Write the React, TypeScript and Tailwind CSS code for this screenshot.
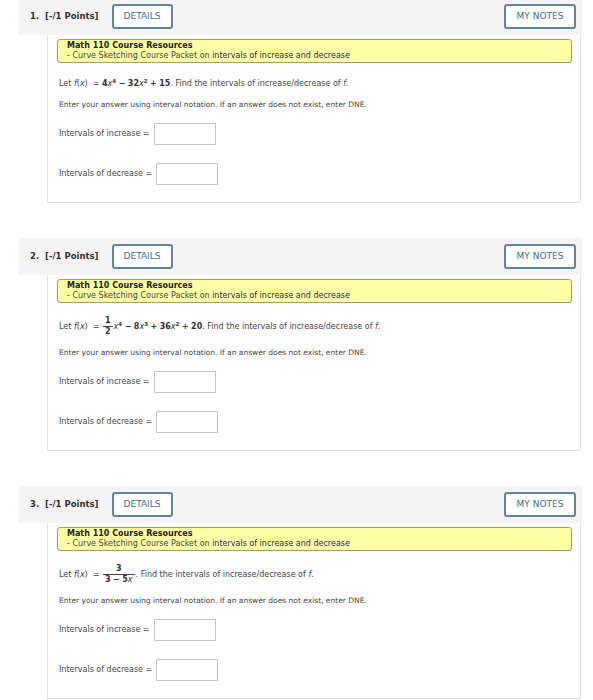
import React from "react";

type Q = {
  n: number;
  expr: React.ReactNode;
  tall: boolean;
};

function X() {
  return <i className="font-normal">x</i>;
}

function Op({ c }: { c: string }) {
  return <span className="mx-[2.5px]">{c}</span>;
}

function Frac({ top, bottom }: { top: React.ReactNode; bottom: React.ReactNode }) {
  return (
    <span className="mx-[1px] inline-flex flex-col items-center align-middle leading-[10px]">
      <span className="px-[1px]">{top}</span>
      <span className="border-t border-[#444] px-[2px]">{bottom}</span>
    </span>
  );
}

const questions: Q[] = [
  {
    n: 1,
    tall: false,
    expr: (
      <span className="font-semibold text-[#333]">
        4<X />
        <sup className="text-[5.5px]">4</sup>
        <Op c="−" />
        32<X />
        <sup className="text-[5.5px]">2</sup>
        <Op c="+" />
        15
      </span>
    ),
  },
  {
    n: 2,
    tall: true,
    expr: (
      <span className="font-semibold text-[#333]">
        <Frac top="1" bottom="2" />
        <X />
        <sup className="text-[5.5px]">4</sup>
        <Op c="−" />
        8<X />
        <sup className="text-[5.5px]">3</sup>
        <Op c="+" />
        36<X />
        <sup className="text-[5.5px]">2</sup>
        <Op c="+" />
        20
      </span>
    ),
  },
  {
    n: 3,
    tall: true,
    expr: (
      <span className="font-semibold text-[#333]">
        <Frac
          top="3"
          bottom={
            <>
              3<Op c="−" />5<X />
            </>
          }
        />
      </span>
    ),
  },
];

function Question({ q, first }: { q: Q; first: boolean }) {
  return (
    <div className={first ? "-mt-[2px]" : "mt-[35px]"}>
      {/* header */}
      <div className="ml-[19px] mr-[11px] flex h-[37px] items-center bg-[#f4f4f4] pl-[11px] pr-[6px]">
        <span className="text-[8.5px] font-bold text-[#333]">
          {q.n}.&nbsp; [-/1 Points]
        </span>
        <button className="ml-[13px] h-[25px] w-[61px] rounded-[3px] border-2 border-[#5f8797] bg-white text-[9px] font-medium text-[#3d6b84]">
          DETAILS
        </button>
        <button className="ml-auto h-[25px] w-[72px] rounded-[3px] border-2 border-[#5f8797] bg-white text-[9px] font-medium text-[#3d6b84]">
          MY NOTES
        </button>
      </div>
      {/* body */}
      <div className="ml-[47px] mr-[12px] border border-t-0 border-[#e2e2e2] bg-white pb-[17px] pl-[11px] pt-[4px] text-[7.5px] text-[#444]">
        <div className="-ml-[2px] mr-[8px] h-[24px] rounded-[3px] border border-[#a19c66] bg-[#ffffa6] px-[9px] pt-[1px] text-[8px] leading-[10px]">
          <div className="font-bold text-[#222]">Math 110 Course Resources</div>
          <div className="text-[#444]">
            - Curve Sketching Course Packet on{" "}
            <span className="text-[#1c2a55]">intervals of increase and decrease</span>
          </div>
        </div>
        <div
          className={
            q.tall
              ? "mt-[13px] flex h-[20px] items-center text-[8px]"
              : "mt-[15px] flex h-[12px] items-center text-[8px]"
          }
        >
          <span className="whitespace-pre">
            Let <i>f</i>(<i>x</i>) <Op c="=" />
            {q.expr}. Find the intervals of increase/decrease of <i>f</i>.
          </span>
        </div>
        <div className={q.tall ? "mt-[11px] leading-[12px]" : "mt-[9px] leading-[12px]"}>
          Enter your answer using interval notation. If an answer does not exist, enter DNE.
        </div>
        <div className="mt-[12px] flex items-center text-[8px]">
          <span>Intervals of increase =</span>
          <div className="ml-[4px] h-[22px] w-[62px] border border-[#c4c4c4] bg-white" />
        </div>
        <div className="mt-[18px] flex items-center text-[8px]">
          <span>Intervals of decrease =</span>
          <div className="ml-[4px] h-[22px] w-[62px] border border-[#c4c4c4] bg-white" />
        </div>
      </div>
    </div>
  );
}

export default function App() {
  return (
    <div
      className="h-[700px] w-[593px] overflow-hidden bg-white"
      style={{ fontFamily: '"DejaVu Sans", Verdana, sans-serif' }}
    >
      {questions.map((q, i) => (
        <Question key={q.n} q={q} first={i === 0} />
      ))}
    </div>
  );
}
